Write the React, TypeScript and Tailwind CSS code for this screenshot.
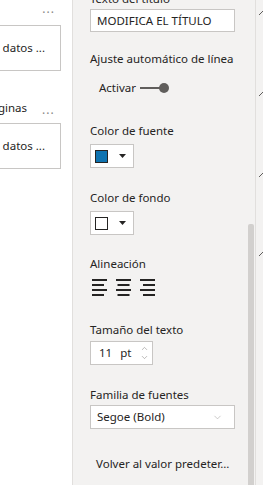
import { ChevronDown, ChevronUp } from "lucide-react";

const font = { fontFamily: '"Noto Sans", "Open Sans", Arial, sans-serif' };

const Label = ({ children, className = "" }: { children: React.ReactNode; className?: string }) => (
  <div className={`text-[11.5px] leading-[16px] text-[#252423] whitespace-nowrap ${className}`}>{children}</div>
);

const Caret = () => (
  <svg width="7" height="4" viewBox="0 0 7 4" className="ml-[11px]">
    <path d="M0 0h7L3.5 4z" fill="#252423" />
  </svg>
);

const AlignIcon = ({ kind }: { kind: "left" | "center" | "right" }) => {
  const short = (y: number) =>
    kind === "left" ? <rect x="0" y={y} width="12" height="2" /> :
    kind === "center" ? <rect x="1.5" y={y} width="12" height="2" /> :
    <rect x="3" y={y} width="12" height="2" />;
  return (
    <svg width="15" height="17" viewBox="0 0 15 17" fill="#252423">
      <rect x="0" y="0" width="15" height="2" />
      {short(5)}
      <rect x="0" y="10" width="15" height="2" />
      {short(15)}
    </svg>
  );
};

const LeftCard = ({ text }: { text: string }) => (
  <div className="h-[46px] w-[90px] -ml-[29px] bg-white border border-[#c8c6c4] flex items-center justify-end pr-[15px] overflow-hidden">
    <span className="text-[11.5px] text-[#252423] whitespace-nowrap">{text}</span>
  </div>
);

const Dots = () => <span className="text-[12px] leading-[16px] tracking-[1px] text-[#8a8886]">...</span>;

export default function App() {
  return (
    <div className="flex h-[485px] w-[263px] overflow-hidden bg-[#f3f2f1]" style={font}>
      {/* left panel */}
      <div className="w-[73px] shrink-0 bg-white border-r border-[#e1dfdd] overflow-hidden flex flex-col">
        <div className="flex justify-end pr-[17px] mt-[1px] h-[16px]"><Dots /></div>
        <div className="mt-[8px]"><LeftCard text="Fuente de datos ..." /></div>
        <div className="flex items-center mt-[29px] h-[16px]">
          <div className="w-[27px] flex justify-end whitespace-nowrap text-[11.5px] text-[#252423]">Páginas</div>
          <div className="ml-[15px]"><Dots /></div>
        </div>
        <div className="mt-[7px]"><LeftCard text="Fuente de datos ..." /></div>
      </div>

      {/* format panel */}
      <div className="w-[174px] shrink-0 pl-[17px] flex flex-col">
        <Label className="-mt-[9px]">Texto del título</Label>
        <div className="mt-[2px] h-[23px] w-[145px] bg-white border border-[#c8c6c4] flex items-center px-[6px] text-[11.5px] text-[#252423]">
          MODIFICA EL TÍTULO
        </div>
        <Label className="mt-[19px]">Ajuste automático de línea</Label>
        <div className="mt-[13px] h-[16px] flex items-center pl-[9px]">
          <span className="text-[11.5px] text-[#252423]">Activar</span>
          <div className="ml-[4px] w-[20px] h-[2px] bg-[#605e5c]" />
          <div className="-ml-[1px] w-[10px] h-[10px] rounded-full bg-[#605e5c]" />
        </div>
        <Label className="mt-[27px]">Color de fuente</Label>
        <div className="mt-[5px] h-[24px] w-[44px] bg-white border border-[#c8c6c4] flex items-center pl-[4px]">
          <div className="w-[13px] h-[13px] bg-[#0f73b0] border border-[#252423]" />
          <Caret />
        </div>
        <Label className="mt-[22px]">Color de fondo</Label>
        <div className="mt-[5px] h-[24px] w-[44px] bg-white border border-[#c8c6c4] flex items-center pl-[4px]">
          <div className="w-[13px] h-[13px] bg-white border border-[#252423]" />
          <Caret />
        </div>
        <Label className="mt-[21px]">Alineación</Label>
        <div className="mt-[7px] flex gap-[9px] pl-[2px]">
          <AlignIcon kind="left" />
          <AlignIcon kind="center" />
          <AlignIcon kind="right" />
        </div>
        <Label className="mt-[26px]">Tamaño del texto</Label>
        <div className="mt-[3px] h-[24px] w-[63px] bg-white border border-[#c8c6c4] flex items-center pl-[8px] text-[11.5px] text-[#252423]">
          <span>11</span>
          <span className="ml-[8px]">pt</span>
          <div className="ml-auto mr-[3px] flex flex-col text-[#8a8886]">
            <ChevronUp size={9} strokeWidth={1.5} />
            <ChevronDown size={9} strokeWidth={1.5} />
          </div>
        </div>
        <Label className="mt-[22px]">Familia de fuentes</Label>
        <div className="mt-[2px] h-[24px] w-[145px] bg-white border border-[#c8c6c4] flex items-center px-[6px] text-[11.5px] text-[#252423]">
          <span>Segoe (Bold)</span>
          <ChevronDown size={11} strokeWidth={1.2} className="ml-auto mr-[5px] text-[#a19f9d]" />
        </div>
        <Label className="mt-[27px] pl-[6px]">Volver al valor predeter...</Label>
      </div>

      {/* scrollbar */}
      <div className="w-[8px] shrink-0 flex flex-col pl-[1px]">
        <div className="mt-[224px] w-[6px] flex-1 bg-[#d2d0ce] rounded-t-[2px]" />
      </div>

      {/* right strip */}
      <div className="flex-1 border-l border-[#e1dfdd] flex flex-col pl-[3px]">
        {[10, 76, 76, 74].map((m, i) => (
          <svg key={i} width="5" height="5" viewBox="0 0 5 5" style={{ marginTop: m }}>
            <path d="M0 5L5 0" stroke="#605e5c" strokeWidth="1" />
          </svg>
        ))}
      </div>
    </div>
  );
}
